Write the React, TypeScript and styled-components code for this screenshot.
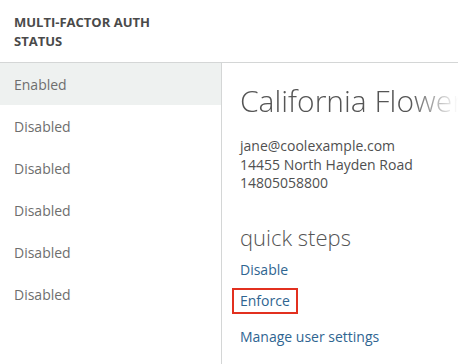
import styled, { createGlobalStyle } from 'styled-components';

const GlobalStyle = createGlobalStyle`
  body {
    margin: 0;
    background: #ffffff;
    font-family: 'Open Sans', 'Noto Sans', sans-serif;
  }
`;

const Page = styled.div`
  width: 458px;
  height: 364px;
  display: flex;
  flex-direction: column;
  overflow: hidden;
`;

const Header = styled.div`
  height: 63px;
  padding: 13px 0 0 14px;
  box-sizing: border-box;
  border-bottom: 1px solid #d4d6d6;
  color: #4a4a4a;
  font-weight: 700;
  font-size: 13px;
  line-height: 19px;
`;

const Body = styled.div`
  flex: 1;
  display: flex;
`;

const StatusList = styled.div`
  width: 221px;
  border-right: 1px solid #d4d6d6;
  display: flex;
  flex-direction: column;
`;

const StatusRow = styled.div<{ $active?: boolean }>`
  height: 42px;
  display: flex;
  align-items: center;
  padding-left: 14px;
  font-size: 14px;
  color: #6e6e6e;
  background: ${(p) => (p.$active ? '#eef1f0' : 'transparent')};
`;

const Detail = styled.div`
  flex: 1;
  padding: 18px 0 0 18px;
  overflow: hidden;
`;

const Title = styled.h1`
  margin: 0;
  font-size: 30px;
  font-weight: 300;
  color: #555555;
  white-space: nowrap;
  line-height: 40px;
  -webkit-mask-image: linear-gradient(to right, #000 78%, transparent 100%);
  mask-image: linear-gradient(to right, #000 78%, transparent 100%);
`;

const Contact = styled.div`
  margin-top: 16px;
  font-size: 14px;
  line-height: 18.5px;
  color: #505050;
`;

const SectionTitle = styled.h2`
  margin: 29px 0 0;
  font-size: 22px;
  font-weight: 300;
  color: #555555;
  line-height: 30px;
`;

const Steps = styled.div`
  display: flex;
  flex-direction: column;
  align-items: flex-start;
  padding-top: 7px;
`;

const StepLink = styled.a<{ $highlight?: boolean; $gap: number }>`
  display: block;
  font-size: 14px;
  line-height: 22px;
  color: #2f6591;
  text-decoration: none;
  margin: 0 0 ${(p) => p.$gap}px ${(p) => (p.$highlight ? -8 : 0)}px;
  padding: 0 ${(p) => (p.$highlight ? 6 : 0)}px;
  border: ${(p) => (p.$highlight ? '2px solid #e2301f' : 'none')};
`;

const statuses = ['Enabled', 'Disabled', 'Disabled', 'Disabled', 'Disabled', 'Disabled'];

const App = () => (
  <>
    <GlobalStyle />
    <Page>
      <Header>
        MULTI-FACTOR AUTH
        <br />
        STATUS
      </Header>
      <Body>
        <StatusList>
          {statuses.map((s, i) => (
            <StatusRow key={i} $active={i === 0}>
              {s}
            </StatusRow>
          ))}
        </StatusList>
        <Detail>
          <Title>California Flower Shop</Title>
          <Contact>
            jane@coolexample.com
            <br />
            14455 North Hayden Road
            <br />
            14805058800
          </Contact>
          <SectionTitle>quick steps</SectionTitle>
          <Steps>
            <StepLink $gap={7}>Disable</StepLink>
            <StepLink $gap={12} $highlight>
              Enforce
            </StepLink>
            <StepLink $gap={0}>Manage user settings</StepLink>
          </Steps>
        </Detail>
      </Body>
    </Page>
  </>
);

export default App;
